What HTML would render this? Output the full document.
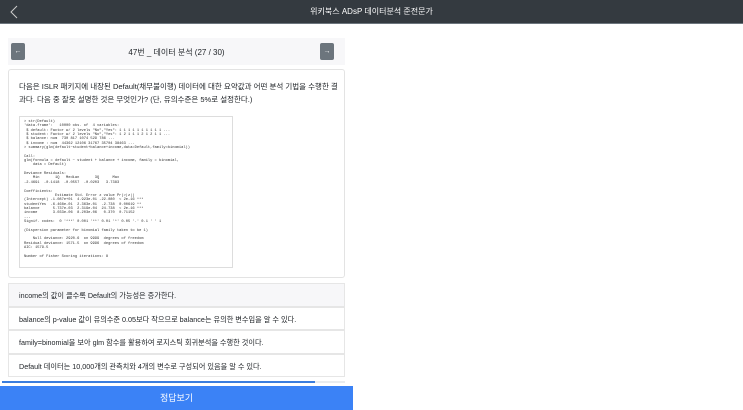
<!DOCTYPE html>
<html><head><meta charset="utf-8"><style>
*{margin:0;padding:0;box-sizing:border-box}
body{width:743px;height:410px;overflow:hidden;background:#fff;font-family:"Liberation Sans","Noto Sans CJK KR",sans-serif;color:#212529;position:relative}
.hdr{position:absolute;left:0;top:0;width:743px;height:24px;background:#343a40;border-bottom:1px solid #6c757d}
.hdr .t{position:absolute;left:0;right:0;top:6px;text-align:center;color:#fff;font-size:8px}
.hdr svg{position:absolute;left:9px;top:5px}
.bar{position:absolute;left:8px;top:38px;width:337px;height:27px;background:#f7f7f9}
.btn{position:absolute;top:5px;width:14px;height:17px;background:#6c757d;border-radius:2px;color:#fff;font-size:7px;text-align:center;line-height:17px}
.bar .t{position:absolute;left:0;right:0;top:9px;text-align:center;font-size:8px}
.card{position:absolute;left:8px;top:69px;width:337px;height:209px;border:1px solid #e3e3e3;border-radius:3px}
.q{position:absolute;left:10px;top:10px;width:320px;font-size:7.5px;line-height:13px;word-break:break-all}
.img{position:absolute;left:10px;top:46px;width:214px;height:152px;border:1px solid #ddd;background:#fff;padding:3px 4px;font-family:"Liberation Mono",monospace;font-size:3.7px;line-height:4.35px;white-space:pre;color:#333;overflow:hidden}
.opt{position:absolute;left:8px;width:337px;height:23.5px;border:1px solid #e6e6e6;font-size:7.2px;padding:7px 10px 0;background:#fff}
.prog{position:absolute;left:2px;top:381px;width:343px;height:2px;background:#e9ecef}
.prog div{width:313px;height:2px;background:#3b7ddd}
.ans{position:absolute;left:0;top:386px;width:353px;height:24px;background:#3b82f6;color:#fff;font-size:9px;text-align:center;line-height:24px}
</style></head><body>
<div class="hdr"><svg width="10" height="14" viewBox="0 0 10 14"><path d="M8 1L2 7l6 6" stroke="#ccc" stroke-width="1" fill="none"/></svg><div class="t">위키북스 ADsP 데이터분석 준전문가</div></div>
<div class="bar"><div class="btn" style="left:3px">←</div><div class="t">47번 _ 데이터 분석 (27 / 30)</div><div class="btn" style="left:312px">→</div></div>
<div class="card">
<div class="q">다음은 ISLR 패키지에 내장된 Default(채무불이행) 데이터에 대한 요약값과 어떤 분석 기법을 수행한 결<br>과다. 다음 중 잘못 설명한 것은 무엇인가? (단, 유의수준은 5%로 설정한다.)</div>
<div class="img">&gt; str(Default)
'data.frame':   10000 obs. of  4 variables:
 $ default: Factor w/ 2 levels "No","Yes": 1 1 1 1 1 1 1 1 1 1 ...
 $ student: Factor w/ 2 levels "No","Yes": 1 2 1 1 1 2 1 2 1 1 ...
 $ balance: num  730 817 1074 529 786 ...
 $ income : num  44362 12106 31767 35704 38463 ...
&gt; summary(glm(default~student+balance+income,data=Default,family=binomial))

Call:
glm(formula = default ~ student + balance + income, family = binomial,
    data = Default)

Deviance Residuals:
    Min       1Q   Median       3Q      Max
-2.4691  -0.1418  -0.0557  -0.0203   3.7383

Coefficients:
              Estimate Std. Error z value Pr(>|z|)
(Intercept) -1.087e+01  4.923e-01 -22.080  &lt; 2e-16 ***
studentYes  -6.468e-01  2.363e-01  -2.738  0.00619 **
balance      5.737e-03  2.319e-04  24.738  &lt; 2e-16 ***
income       3.033e-06  8.203e-06   0.370  0.71152
---
Signif. codes:  0 '***' 0.001 '**' 0.01 '*' 0.05 '.' 0.1 ' ' 1

(Dispersion parameter for binomial family taken to be 1)

    Null deviance: 2920.6  on 9999  degrees of freedom
Residual deviance: 1571.5  on 9996  degrees of freedom
AIC: 1579.5

Number of Fisher Scoring iterations: 8</div>
</div>
<div class="opt" style="top:283px;background:#f7f7f9">income의 값이 클수록 Default의 가능성은 증가한다.</div>
<div class="opt" style="top:306.5px">balance의 p-value 값이 유의수준 0.05보다 작으므로 balance는 유의한 변수임을 알 수 있다.</div>
<div class="opt" style="top:330px">family=binomial을 보아 glm 함수를 활용하여 로지스틱 회귀분석을 수행한 것이다.</div>
<div class="opt" style="top:353.5px">Default 데이터는 10,000개의 관측치와 4개의 변수로 구성되어 있음을 알 수 있다.</div>
<div class="prog"><div></div></div>
<div class="ans">정답보기</div>
</body></html>
